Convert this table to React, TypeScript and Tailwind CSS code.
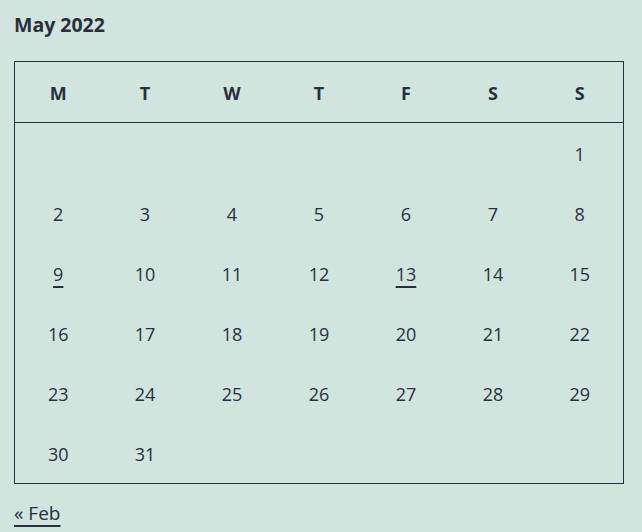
import React from "react";

const DAYS = ["M", "T", "W", "T", "F", "S", "S"];

// May 2022 starts on a Sunday
const WEEKS: (number | null)[][] = [
  [null, null, null, null, null, null, 1],
  [2, 3, 4, 5, 6, 7, 8],
  [9, 10, 11, 12, 13, 14, 15],
  [16, 17, 18, 19, 20, 21, 22],
  [23, 24, 25, 26, 27, 28, 29],
  [30, 31, null, null, null, null, null],
];

const LINKED = [9, 13];

export default function App() {
  return (
    <div
      className="w-[642px] h-[532px] bg-[#d1e4dd] text-[#28303d] px-[14px] pt-[11px]"
      style={{ fontFamily: '"Open Sans", "Noto Sans", sans-serif' }}
    >
      <div className="text-[19.5px] font-bold leading-[28px]">May 2022</div>

      <table className="mt-[22px] w-[610px] border border-[#28303d] border-collapse table-fixed">
        <thead>
          <tr className="border-b border-[#28303d]">
            {DAYS.map((d, i) => (
              <th key={i} className="h-[61px] text-[18px] font-bold text-center p-0 pt-[2px]">
                {d}
              </th>
            ))}
          </tr>
        </thead>
        <tbody>
          {WEEKS.map((week, wi) => (
            <tr key={wi} className={wi === WEEKS.length - 1 ? "h-[61px]" : "h-[60px]"}>
              {week.map((n, di) => (
                <td key={di} className="text-[18px] text-center p-0 pt-[4px]">
                  {n && LINKED.includes(n) ? (
                    <a href="#" className="underline decoration-2 underline-offset-[5px]">
                      {n}
                    </a>
                  ) : (
                    n
                  )}
                </td>
              ))}
            </tr>
          ))}
        </tbody>
      </table>

      <div className="mt-[16px] text-[19px] leading-[26px]">
        <a href="#" className="underline decoration-2 underline-offset-[5px]">
          « Feb
        </a>
      </div>
    </div>
  );
}
